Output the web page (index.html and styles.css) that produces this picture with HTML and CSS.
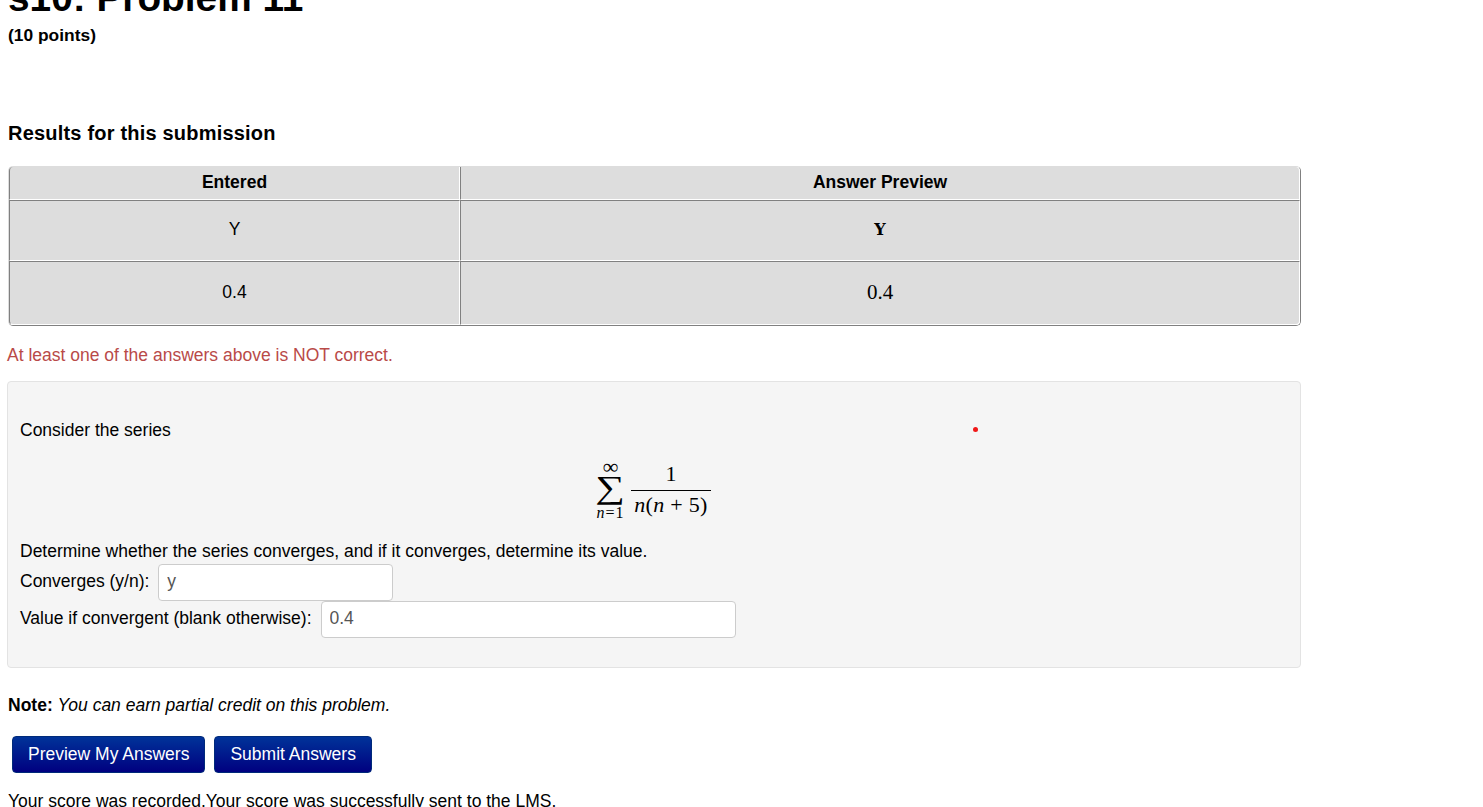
FILE: index.html
```html
<!DOCTYPE html>
<html lang="en">
<head>
    <meta charset="UTF-8">
    <title>s10: Problem 11</title>
    <link rel="stylesheet" href="styles.css">
</head>
<body>
    <div class="page">
        <h1 class="problem-title">s10: Problem 11</h1>
        <p class="points">(10 points)</p>

        <h2 class="results-title">Results for this submission</h2>

        <table class="attempt-results">
            <tr class="head-row">
                <th class="col-entered">Entered</th>
                <th class="col-preview">Answer Preview</th>
            </tr>
            <tr class="first-row">
                <td>Y</td>
                <td class="preview preview-text">Y</td>
            </tr>
            <tr class="second-row">
                <td class="corner-left">0.4</td>
                <td class="preview corner-right">0.4</td>
            </tr>
        </table>

        <p class="not-correct">At least one of the answers above is NOT correct.</p>

        <div class="problem-box">
            <div class="intro-row">
                <span>Consider the series</span>
                <span class="red-dot"></span>
            </div>

            <div class="formula">
                <div class="sum">
                    <span class="sum-top">∞</span>
                    <span class="sum-sign">∑</span>
                    <span class="sum-bottom"><i>n</i>=1</span>
                </div>
                <div class="fraction">
                    <span class="numerator">1</span>
                    <span class="denominator"><i>n</i>(<i>n</i> + 5)</span>
                </div>
            </div>

            <p class="question">Determine whether the series converges, and if it converges, determine its value.</p>

            <div class="answer-row">
                <label for="converges">Converges (y/n):</label>
                <input type="text" id="converges" class="answer-short" value="y">
            </div>
            <div class="answer-row">
                <label for="value">Value if convergent (blank otherwise):</label>
                <input type="text" id="value" class="answer-long" value="0.4">
            </div>
        </div>

        <p class="note"><b>Note:</b> <i>You can earn partial credit on this problem.</i></p>

        <div class="buttons">
            <button type="button" class="btn">Preview My Answers</button>
            <button type="button" class="btn">Submit Answers</button>
        </div>

        <p class="score">Your score was recorded.Your score was successfully sent to the LMS.</p>
    </div>
</body>
</html>
```

FILE: styles.css
```css
* {
    margin: 0;
    padding: 0;
    box-sizing: border-box;
}

html, body {
    height: 807px;
    overflow: hidden;
}

body {
    font-family: 'Liberation Sans', Arial, sans-serif;
    font-size: 17.5px;
    color: #000;
    background: white;
}

.page {
    width: 1301px;
    padding-left: 8px;
}

.problem-title {
    font-size: 38.8px;
    line-height: 46px;
    font-weight: bold;
    margin-top: -25px;
}

.points {
    font-size: 17.4px;
    font-weight: bold;
    line-height: 24px;
    margin-top: 2px;
}

.results-title {
    font-size: 20px;
    line-height: 24px;
    font-weight: bold;
    letter-spacing: 0.2px;
    margin-top: 74px;
}

.attempt-results {
    width: 1293px;
    height: 160px;
    margin-top: 21px;
    border: 1px solid;
    border-color: #ddd #808080 #808080 #ddd;
    border-radius: 5px;
    border-spacing: 0;
    background: white;
    table-layout: fixed;
}

.attempt-results th,
.attempt-results td {
    padding-bottom: 2px;
    background: #ddd;
    text-align: center;
    border: 1px solid;
    border-color: #808080 white white #808080;
}

.attempt-results th {
    height: 33px;
    border-top: none;
    font-size: 17.5px;
}

.col-entered {
    width: 451px;
    border-top-left-radius: 4px;
}

.col-preview {
    border-top-right-radius: 4px;
}

.corner-left {
    border-bottom-left-radius: 4px;
}

.corner-right {
    border-bottom-right-radius: 4px;
}

.first-row td {
    height: 61px;
}

.second-row td {
    height: 64px;
}

.preview {
    font-family: 'Liberation Serif', serif;
    font-size: 21px;
}

.preview-text {
    font-family: 'DejaVu Serif', serif;
    font-size: 16px;
    font-weight: bold;
}

.not-correct {
    color: #b94a48;
    line-height: 24px;
    margin-top: 17px;
    margin-left: -1px;
}

.problem-box {
    width: 1294px;
    height: 287px;
    margin-top: 14px;
    margin-left: -1px;
    padding: 36px 12px 0;
    background: #f5f5f5;
    border: 1px solid #e3e3e3;
    border-radius: 4px;
}

.intro-row {
    display: flex;
    align-items: center;
    line-height: 24px;
}

.red-dot {
    width: 5px;
    height: 5px;
    margin-left: 802px;
    margin-bottom: 2px;
    border-radius: 50%;
    background: #f01818;
}

.formula {
    display: flex;
    justify-content: center;
    align-items: center;
    gap: 7px;
    height: 60px;
    margin-top: 18px;
    font-family: 'Liberation Serif', serif;
}

.sum {
    display: flex;
    flex-direction: column;
    align-items: center;
    width: 27px;
    height: 60px;
}

.sum-top {
    font-size: 22px;
    line-height: 14px;
    height: 14px;
}

.sum-sign {
    font-size: 32px;
    line-height: 32px;
    height: 32px;
    transform: translateY(-3px) scaleX(1.3);
}

.sum-bottom {
    font-size: 16px;
    line-height: 14px;
    height: 14px;
    letter-spacing: 1px;
}

.fraction {
    display: flex;
    flex-direction: column;
    align-items: center;
    width: 80px;
    font-size: 22px;
}

.numerator {
    width: 100%;
    height: 31px;
    text-align: center;
    line-height: 28px;
    border-bottom: 1px solid black;
}

.denominator {
    height: 29px;
    line-height: 27px;
    letter-spacing: 0.3px;
}

.question {
    line-height: 24px;
    margin-top: 19px;
}

.answer-row {
    display: flex;
    align-items: center;
    gap: 9px;
    height: 37px;
}

.answer-row input {
    height: 37px;
    margin-top: 2px;
    padding: 0 8px 2px;
    font-family: inherit;
    font-size: 17.5px;
    color: #555;
    background: white;
    border: 1px solid #ccc;
    border-radius: 4px;
}

.answer-short {
    width: 235px;
}

.answer-long {
    width: 415px;
}

.note {
    line-height: 24px;
    margin-top: 25px;
}

.buttons {
    display: flex;
    gap: 9px;
    margin-top: 19px;
    padding-left: 4px;
}

.btn {
    height: 37px;
    padding: 0 15px;
    font-family: inherit;
    font-size: 17.5px;
    color: white;
    background: linear-gradient(to bottom, #003399, #000080);
    border: 1px solid #002a7a;
    border-radius: 4px;
    cursor: pointer;
}

.score {
    line-height: 24px;
    margin-top: 16px;
}
```
